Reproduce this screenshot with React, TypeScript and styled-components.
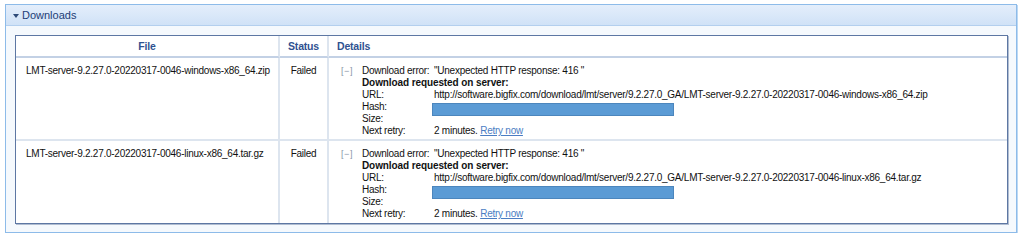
import React from 'react';
import styled, { createGlobalStyle } from 'styled-components';

const GlobalStyle = createGlobalStyle`
  html, body {
    margin: 0;
    padding: 0;
    background: #ffffff;
  }
  body {
    font-family: "Liberation Sans", Arial, sans-serif;
    font-size: 10px;
    color: #111111;
  }
`;

type Download = {
  file: string;
  status: string;
  url: string;
};

const downloads: Download[] = [
  {
    file: 'LMT-server-9.2.27.0-20220317-0046-windows-x86_64.zip',
    status: 'Failed',
    url: 'http://software.bigfix.com/download/lmt/server/9.2.27.0_GA/LMT-server-9.2.27.0-20220317-0046-windows-x86_64.zip',
  },
  {
    file: 'LMT-server-9.2.27.0-20220317-0046-linux-x86_64.tar.gz',
    status: 'Failed',
    url: 'http://software.bigfix.com/download/lmt/server/9.2.27.0_GA/LMT-server-9.2.27.0-20220317-0046-linux-x86_64.tar.gz',
  },
];

export default function App() {
  return (
    <>
      <GlobalStyle />
      <Panel>
        <PanelHeader>
          <Caret />
          <PanelTitle>Downloads</PanelTitle>
        </PanelHeader>
        <PanelBody>
          <Table>
            <HeadCell $align="center">File</HeadCell>
            <HeadCell $align="center">Status</HeadCell>
            <HeadCell $align="left" $last>Details</HeadCell>
            {downloads.map((d, i) => (
              <React.Fragment key={d.file}>
                <FileCell $lastRow={i === downloads.length - 1}>{d.file}</FileCell>
                <StatusCell $lastRow={i === downloads.length - 1}>{d.status}</StatusCell>
                <DetailsCell $lastRow={i === downloads.length - 1}>
                  <Toggle>[&#8722;]</Toggle>
                  <DetailList>
                    <Label>Download error:</Label>
                    <Value>"Unexpected HTTP response: 416 "</Value>
                    <Heading>Download requested on server:</Heading>
                    <Label>URL:</Label>
                    <Value>{d.url}</Value>
                    <Label>Hash:</Label>
                    <Value>
                      <Redacted />
                    </Value>
                    <Label>Size:</Label>
                    <Value />
                    <Label>Next retry:</Label>
                    <Value>
                      2 minutes. <RetryLink href="#">Retry now</RetryLink>
                    </Value>
                  </DetailList>
                </DetailsCell>
              </React.Fragment>
            ))}
          </Table>
        </PanelBody>
      </Panel>
    </>
  );
}

const Panel = styled.section`
  margin: 4px 0 0 5px;
  width: 1010px;
  height: 227px;
  border: 1px solid #8dbbe9;
  box-shadow: 1px 1px 0 #bcd8f3;
  display: flex;
  flex-direction: column;
  background: #f5f9fd;
`;

const PanelHeader = styled.div`
  height: 20px;
  display: flex;
  align-items: center;
  padding-left: 7px;
  gap: 3px;
  background: linear-gradient(#e4eefb, #d0e2f7);
  border-bottom: 1px solid #b3cfee;
`;

const Caret = styled.span`
  width: 0;
  height: 0;
  border-left: 3.5px solid transparent;
  border-right: 3.5px solid transparent;
  border-top: 4px solid #2e4a78;
  margin-top: 1px;
`;

const PanelTitle = styled.span`
  font-family: "Liberation Sans", Arial, sans-serif;
  font-size: 11px;
  color: #1d3d77;
`;

const PanelBody = styled.div`
  flex: 1;
  padding: 9px 8px 8px 9px;
`;

const Table = styled.div`
  display: grid;
  grid-template-columns: 264px 49px 1fr;
  grid-template-rows: 22px 83px 82px;
  background: #ffffff;
  border: 1px solid #5d77a3;
  box-shadow: 1px 1px 0 #b0bdd1;
`;

const HeadCell = styled.div<{ $align: 'left' | 'center'; $last?: boolean }>`
  display: flex;
  align-items: center;
  justify-content: ${(p) => (p.$align === 'center' ? 'center' : 'flex-start')};
  padding-left: ${(p) => (p.$align === 'center' ? '0' : '8px')};
  font-weight: bold;
  font-size: 10.5px;
  letter-spacing: -0.2px;
  color: #2f5291;
  border-bottom: 2px solid #c3d1e5;
  border-right: ${(p) => (p.$last ? 'none' : '2px solid #dde5ef')};
`;

const BodyCell = styled.div<{ $lastRow?: boolean }>`
  padding-top: 7px;
  line-height: 12px;
  font-size: 10px;
  letter-spacing: -0.25px;
  border-bottom: ${(p) => (p.$lastRow ? 'none' : '2px solid #dde5ef')};
`;

const FileCell = styled(BodyCell)`
  padding-left: 10px;
  border-right: 2px solid #dde5ef;
`;

const StatusCell = styled(BodyCell)`
  text-align: center;
  border-right: 2px solid #dde5ef;
`;

const DetailsCell = styled(BodyCell)`
  display: flex;
  padding-left: 12px;
`;

const Toggle = styled.span`
  width: 21px;
  color: #8a96a8;
  font-size: 9px;
  letter-spacing: 0.6px;
`;

const DetailList = styled.div`
  display: grid;
  grid-template-columns: 72px auto;
  grid-auto-rows: 12px;
`;

const Label = styled.span`
  white-space: nowrap;
`;

const Value = styled.span`
  white-space: nowrap;
`;

const Heading = styled.span`
  grid-column: 1 / span 2;
  font-weight: bold;
  letter-spacing: -0.1px;
`;

const Redacted = styled.span`
  display: block;
  width: 240px;
  height: 11px;
  margin-top: 2px;
  margin-left: -2px;
  background: #5b9bd5;
  border: 1px solid #4c86bd;
`;

const RetryLink = styled.a`
  color: #4b7dc3;
  text-decoration: underline;
`;
